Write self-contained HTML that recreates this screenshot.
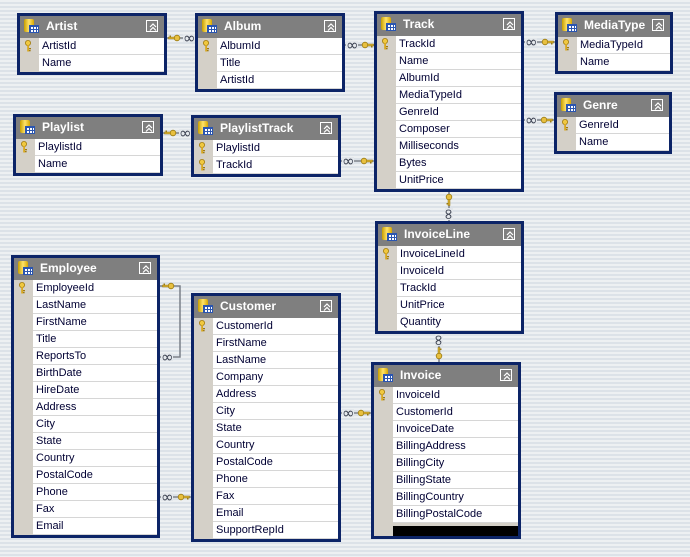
<!DOCTYPE html>
<html><head><meta charset="utf-8"><style>
html,body{margin:0;padding:0}
body{width:690px;height:557px;position:relative;overflow:hidden;font-family:"Liberation Sans",Tahoma,sans-serif;
background:repeating-linear-gradient(to bottom,#edf0f2 0,#edf0f2 2px,#dce2e8 2px,#dce2e8 4px)}
.t{position:absolute;border:3px solid #0c2467;background:#d4d0c8;box-sizing:border-box}
.h{height:22px;background:#7f7f7f;position:relative;color:#fff;font-weight:bold;font-size:12px;line-height:21px;padding-left:26px;margin-bottom:0}
.h .ic{position:absolute;left:4px;top:3px;width:10px;height:13px;background:linear-gradient(90deg,#c9a000,#ffe36a,#d8a800);border-radius:2px}
.h .ic2{position:absolute;left:9px;top:9px;width:10px;height:8px;border:1px solid #2a55b0;box-sizing:border-box;
background-image:linear-gradient(#2a55b0 1px,transparent 1px),linear-gradient(90deg,#2a55b0 1px,transparent 1px);background-size:3px 3px;background-color:#fff}
.h .b{position:absolute;right:6px;top:4px;width:12px;height:12px;border:1px solid #fff;box-sizing:border-box}
.h .b svg{position:absolute;left:1px;top:1px}
.r{margin-left:19px;height:16px;border-bottom:1px solid #d6d6d6;background:#fff;line-height:16px;padding-left:3px;font-size:11px;color:#000033;position:relative}
.k{position:absolute;left:-15px;top:2px;width:8px;height:12px}
svg.o{position:absolute;left:0;top:0}
</style></head><body>

<svg width="0" height="0" style="position:absolute">
<defs>
<g id="kh"><circle cx="3" cy="3" r="2.8" fill="#e8c040" stroke="#9a7a10" stroke-width="0.8"/><rect x="5.5" y="2" width="6" height="2" fill="#d8b030" stroke="#9a7a10" stroke-width="0.5"/><rect x="9" y="3.5" width="1.5" height="2" fill="#9a7a10"/></g>
<symbol id="kv" viewBox="0 0 8 12"><circle cx="4" cy="3" r="2.6" fill="#f0c840" stroke="#a07a10" stroke-width="0.8"/><rect x="3.2" y="5" width="1.8" height="6.5" fill="#d8a820"/><rect x="5" y="8" width="2" height="1.3" fill="#a07a10"/><rect x="5" y="10" width="1.6" height="1.3" fill="#a07a10"/></symbol>
<symbol id="ch" viewBox="0 0 10 10"><polyline points="2,5 5,2 8,5" fill="none" stroke="#fff" stroke-width="1.2"/><polyline points="2,8.5 5,5.5 8,8.5" fill="none" stroke="#fff" stroke-width="1.2"/></symbol>
</defs></svg>

<svg class="o" width="690" height="557">
<g stroke="#7a7f88" stroke-width="1.5" fill="none">
<line x1="167" y1="38" x2="195" y2="38"/>
<line x1="345" y1="45" x2="374" y2="45"/>
<line x1="524" y1="42" x2="555" y2="42"/>
<line x1="524" y1="120" x2="554" y2="120"/>
<line x1="163" y1="133" x2="191" y2="133"/>
<line x1="341" y1="161" x2="374" y2="161"/>
<line x1="449" y1="192" x2="449" y2="221"/>
<line x1="439" y1="333" x2="439" y2="362"/>
<polyline points="160,286 180,286 180,357 160,357"/>
<line x1="160" y1="497" x2="191" y2="497"/>
<line x1="341" y1="413" x2="371" y2="413"/>
</g>
<g font-size="15" fill="#3a4050" font-family="DejaVu Sans,sans-serif">
<rect x="183" y="34" width="12" height="8" fill="#e4e8ec"/><text x="183" y="43">∞</text>
<rect x="346" y="41" width="12" height="8" fill="#e4e8ec"/><text x="346" y="50">∞</text>
<rect x="525" y="38" width="12" height="8" fill="#e4e8ec"/><text x="525" y="47">∞</text>
<rect x="525" y="116" width="12" height="8" fill="#e4e8ec"/><text x="525" y="125">∞</text>
<rect x="179" y="129" width="12" height="8" fill="#e4e8ec"/><text x="179" y="138">∞</text>
<rect x="342" y="157" width="12" height="8" fill="#e4e8ec"/><text x="342" y="166">∞</text>
<rect x="445" y="208" width="8" height="12" fill="#e4e8ec"/><text x="443" y="219" transform="rotate(90 449 214)">∞</text>
<rect x="435" y="334" width="8" height="12" fill="#e4e8ec"/><text x="433" y="345" transform="rotate(90 439 340)">∞</text>
<rect x="161" y="353" width="12" height="8" fill="#e4e8ec"/><text x="161" y="362">∞</text>
<rect x="161" y="493" width="12" height="8" fill="#e4e8ec"/><text x="161" y="502">∞</text>
<rect x="342" y="409" width="12" height="8" fill="#e4e8ec"/><text x="342" y="418">∞</text>
</g>
<use href="#kh" transform="translate(180,41) rotate(180)"/>
<use href="#kh" transform="translate(362,42)"/>
<use href="#kh" transform="translate(542,39)"/>
<use href="#kh" transform="translate(541,117)"/>
<use href="#kh" transform="translate(176,136) rotate(180)"/>
<use href="#kh" transform="translate(361,158)"/>
<use href="#kh" transform="translate(452,194) rotate(90)"/>
<use href="#kh" transform="translate(436,359) rotate(-90)"/>
<use href="#kh" transform="translate(174,289) rotate(180)"/>
<use href="#kh" transform="translate(178,494)"/>
<use href="#kh" transform="translate(358,410)"/>
</svg>

<div class="t" style="left:17px;top:13px;width:150px"><div class="h"><i class="ic"></i><i class="ic2"></i>Artist<span class="b"><svg width="10" height="10"><use href="#ch"/></svg></span></div>
<div class="r"><svg class="k"><use href="#kv"/></svg>ArtistId</div><div class="r">Name</div></div>

<div class="t" style="left:195px;top:13px;width:150px"><div class="h"><i class="ic"></i><i class="ic2"></i>Album<span class="b"><svg width="10" height="10"><use href="#ch"/></svg></span></div>
<div class="r"><svg class="k"><use href="#kv"/></svg>AlbumId</div><div class="r">Title</div><div class="r">ArtistId</div></div>

<div class="t" style="left:374px;top:11px;width:150px"><div class="h"><i class="ic"></i><i class="ic2"></i>Track<span class="b"><svg width="10" height="10"><use href="#ch"/></svg></span></div>
<div class="r"><svg class="k"><use href="#kv"/></svg>TrackId</div><div class="r">Name</div><div class="r">AlbumId</div><div class="r">MediaTypeId</div><div class="r">GenreId</div><div class="r">Composer</div><div class="r">Milliseconds</div><div class="r">Bytes</div><div class="r">UnitPrice</div></div>

<div class="t" style="left:555px;top:12px;width:118px"><div class="h"><i class="ic"></i><i class="ic2"></i>MediaType<span class="b"><svg width="10" height="10"><use href="#ch"/></svg></span></div>
<div class="r"><svg class="k"><use href="#kv"/></svg>MediaTypeId</div><div class="r">Name</div></div>

<div class="t" style="left:554px;top:92px;width:118px"><div class="h"><i class="ic"></i><i class="ic2"></i>Genre<span class="b"><svg width="10" height="10"><use href="#ch"/></svg></span></div>
<div class="r"><svg class="k"><use href="#kv"/></svg>GenreId</div><div class="r">Name</div></div>

<div class="t" style="left:13px;top:114px;width:150px"><div class="h"><i class="ic"></i><i class="ic2"></i>Playlist<span class="b"><svg width="10" height="10"><use href="#ch"/></svg></span></div>
<div class="r"><svg class="k"><use href="#kv"/></svg>PlaylistId</div><div class="r">Name</div></div>

<div class="t" style="left:191px;top:115px;width:150px"><div class="h"><i class="ic"></i><i class="ic2"></i>PlaylistTrack<span class="b"><svg width="10" height="10"><use href="#ch"/></svg></span></div>
<div class="r"><svg class="k"><use href="#kv"/></svg>PlaylistId</div><div class="r"><svg class="k"><use href="#kv"/></svg>TrackId</div></div>

<div class="t" style="left:375px;top:221px;width:149px"><div class="h"><i class="ic"></i><i class="ic2"></i>InvoiceLine<span class="b"><svg width="10" height="10"><use href="#ch"/></svg></span></div>
<div class="r"><svg class="k"><use href="#kv"/></svg>InvoiceLineId</div><div class="r">InvoiceId</div><div class="r">TrackId</div><div class="r">UnitPrice</div><div class="r">Quantity</div></div>

<div class="t" style="left:11px;top:255px;width:149px"><div class="h"><i class="ic"></i><i class="ic2"></i>Employee<span class="b"><svg width="10" height="10"><use href="#ch"/></svg></span></div>
<div class="r"><svg class="k"><use href="#kv"/></svg>EmployeeId</div><div class="r">LastName</div><div class="r">FirstName</div><div class="r">Title</div><div class="r">ReportsTo</div><div class="r">BirthDate</div><div class="r">HireDate</div><div class="r">Address</div><div class="r">City</div><div class="r">State</div><div class="r">Country</div><div class="r">PostalCode</div><div class="r">Phone</div><div class="r">Fax</div><div class="r">Email</div></div>

<div class="t" style="left:191px;top:293px;width:150px"><div class="h"><i class="ic"></i><i class="ic2"></i>Customer<span class="b"><svg width="10" height="10"><use href="#ch"/></svg></span></div>
<div class="r"><svg class="k"><use href="#kv"/></svg>CustomerId</div><div class="r">FirstName</div><div class="r">LastName</div><div class="r">Company</div><div class="r">Address</div><div class="r">City</div><div class="r">State</div><div class="r">Country</div><div class="r">PostalCode</div><div class="r">Phone</div><div class="r">Fax</div><div class="r">Email</div><div class="r">SupportRepId</div></div>

<div class="t" style="left:371px;top:362px;width:150px"><div class="h"><i class="ic"></i><i class="ic2"></i>Invoice<span class="b"><svg width="10" height="10"><use href="#ch"/></svg></span></div>
<div class="r"><svg class="k"><use href="#kv"/></svg>InvoiceId</div><div class="r">CustomerId</div><div class="r">InvoiceDate</div><div class="r">BillingAddress</div><div class="r">BillingCity</div><div class="r">BillingState</div><div class="r">BillingCountry</div><div class="r">BillingPostalCode</div><div class="r" style="height:10px;background:#000;margin-top:3px;border:0"></div></div>
</body></html>
